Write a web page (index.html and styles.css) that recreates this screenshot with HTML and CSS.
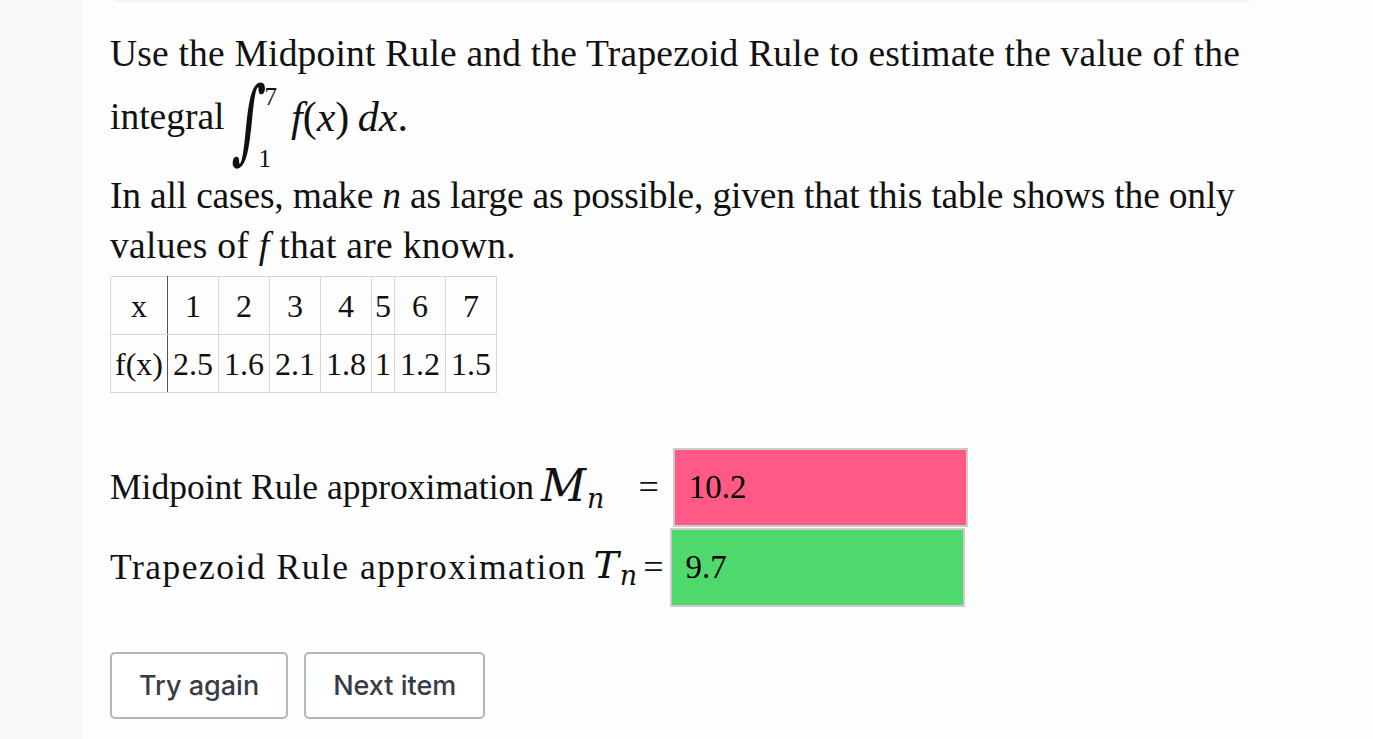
FILE: index.html
```html
<!DOCTYPE html>
<html>
<head>
<meta charset="utf-8">
<link rel="stylesheet" href="styles.css">
</head>
<body>
<div class="page">
  <div class="content">
    <div class="topline"></div>
    <div class="line l1">Use the Midpoint Rule and the Trapezoid Rule to estimate the value of the</div>
    <div class="line l2">
      <span class="word">integral</span>
      <span class="integral">
        <span class="intsign">∫</span>
        <span class="limits"><span class="up">7</span><span class="lo">1</span></span>
      </span>
      <span class="math expr"><i>f</i>(<i>x</i>)&#8201;<i>dx</i>.</span>
    </div>
    <div class="line l3">In all cases, make <i class="mi">n</i> as large as possible, given that this table shows the only</div>
    <div class="line l4">values of <i class="mi">f</i> that are known.</div>
    <table class="vals">
      <tr><td class="hd">x</td><td>1</td><td>2</td><td>3</td><td>4</td><td class="dk">5</td><td>6</td><td>7</td></tr>
      <tr><td class="hd">f(x)</td><td>2.5</td><td>1.6</td><td>2.1</td><td>1.8</td><td class="dk">1</td><td>1.2</td><td>1.5</td></tr>
    </table>
    <div class="answers">
      <div class="arow r1">
        <span class="label">Midpoint Rule approximation</span>
        <span class="math sym"><i>M</i><sub><i>n</i></sub></span>
        <span class="math eq">=</span>
        <div class="box bad">10.2</div>
      </div>
      <div class="arow r2">
        <span class="label">Trapezoid Rule approximation</span>
        <span class="math sym"><i>T</i><sub><i>n</i></sub></span>
        <span class="math eq">=</span>
        <div class="box good">9.7</div>
      </div>
    </div>
    <div class="buttons">
      <button class="btn b1">Try again</button>
      <button class="btn b2">Next item</button>
    </div>
  </div>
</div>
</body>
</html>
```

FILE: styles.css
```css
html, body {
  margin: 0;
  padding: 0;
}
body {
  background: #f9f9f9;
  width: 1373px;
  height: 739px;
  overflow: hidden;
}
.page {
  margin-left: 82px;
  background: #fdfdfd;
  height: 739px;
}
.content {
  padding-left: 28px;
  font-family: "Liberation Serif", "Times New Roman", serif;
  font-size: 37.5px;
  color: #111;
}
.topline {
  height: 2px;
  margin-left: 5px;
  width: 1135px;
  background: #f0f4f5;
  margin-bottom: 27px;
}
.line {
  line-height: 50px;
  white-space: nowrap;
}
.l1 {
  letter-spacing: 0.2px;
}
.l3 {
  letter-spacing: -0.19px;
}
.l4 {
  letter-spacing: 0.3px;
}
.l2 {
  height: 92px;
  display: flex;
  align-items: flex-start;
}
.l2 .word {
  margin-top: 13px;
}
.integral {
  display: inline-flex;
  margin-left: 6px;
  height: 92px;
}
.intsign {
  font-family: "DejaVu Serif", serif;
  font-size: 92px;
  line-height: 92px;
  transform: scaleX(0.6) skewX(-8deg);
  display: inline-block;
  margin-top: -4px;
  margin-left: -6px;
  margin-right: -12px;
}
.limits {
  display: flex;
  flex-direction: column;
  justify-content: space-between;
  font-size: 25px;
  line-height: 24px;
  padding-top: 6px;
  height: 86px;
}
.limits .up { margin-left: 4px; }
.limits .lo { margin-left: -2px; }
.expr {
  margin-top: 13px;
  margin-left: 14px;
  font-size: 42px;
}
.math i {
  font-style: italic;
}
.mi {
  font-style: italic;
}
table.vals {
  border-collapse: collapse;
  margin-top: 5px;
  font-size: 32px;
  border: 1px solid #555;
}
table.vals td {
  border: 1px solid #d6d6d6;
  height: 57px;
  padding: 0 5px;
  text-align: center;
  line-height: 32px;
}
table.vals td.hd {
  border-right: 1px solid #555;
  padding: 0 4px;
}
table.vals td.dk {
  border-left: 1px solid #555;
  padding: 0 3px;
}
.answers {
  margin-top: 54px;
}
.arow {
  display: flex;
  align-items: center;
  height: 80px;
}
.label {
  font-size: 35.5px;
}
.r2 .label {
  letter-spacing: 1.5px;
}
.sym {
  margin-left: 7px;
  font-family: "DejaVu Serif", serif;
  font-size: 38px;
}
.r1 .sym {
  font-size: 44px;
}
.sym sub {
  font-size: 27px;
  vertical-align: -7px;
  margin-left: 1px;
}
.eq {
  font-size: 36px;
  margin-left: 34px;
  margin-right: 14px;
}
.r2 .eq {
  margin-left: 6px;
  margin-right: 6px;
}
.box {
  width: 277px;
  height: 75px;
  border: 2px solid #cccccc;
  font-size: 33px;
  line-height: 75px;
  padding-left: 14px;
  box-sizing: content-box;
  color: #000;
}
.bad {
  background: #ff5a86;
}
.good {
  background: #4fd96c;
}
.buttons {
  display: flex;
  gap: 16px;
  margin-top: 45px;
}
.btn {
  font-family: "Inter", "Liberation Sans", sans-serif;
  font-size: 27px;
  font-weight: 500;
  color: #363d48;
  background: #ffffff;
  border: 2px solid #aeb6c0;
  border-radius: 5px;
  height: 67px;
  padding: 0 27px;
}
```
